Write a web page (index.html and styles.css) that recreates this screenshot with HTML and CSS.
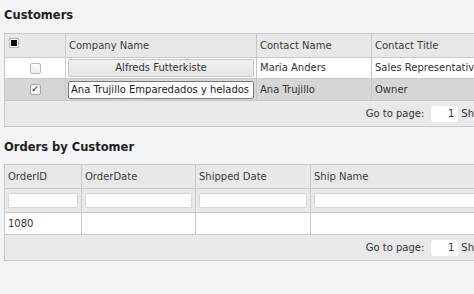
FILE: index.html
```html
<!DOCTYPE html>
<html>
<head>
<meta charset="utf-8">
<link rel="stylesheet" href="styles.css">
</head>
<body>
<div class="page">
  <h2 class="title first">Customers</h2>
  <div class="grid grid-customers">
    <table class="tbl">
      <colgroup>
        <col class="c-sel"><col class="c-company"><col class="c-contact"><col class="c-title">
      </colgroup>
      <thead>
        <tr class="head">
          <th class="sel-head"><span class="hdr-check"></span></th>
          <th>Company Name</th>
          <th>Contact Name</th>
          <th>Contact Title</th>
        </tr>
      </thead>
      <tbody>
        <tr class="row row1">
          <td class="sel"><span class="chk"></span></td>
          <td class="edit"><span class="btn">Alfreds Futterkiste</span></td>
          <td>Maria Anders</td>
          <td>Sales Representative</td>
        </tr>
        <tr class="row row2 selected">
          <td class="sel"><span class="chk checked">✓</span></td>
          <td class="edit"><span class="txt">Ana Trujillo Emparedados y helados</span></td>
          <td>Ana Trujillo</td>
          <td>Owner</td>
        </tr>
      </tbody>
    </table>
    <div class="pager">
      <span class="lbl">Go to page:</span>
      <span class="pg">1</span>
      <span class="lbl">Show rows:</span>
      <span class="pg">10</span>
      <span class="lbl">1-2 of 2</span>
    </div>
  </div>

  <h2 class="title second">Orders by Customer</h2>
  <div class="grid grid-orders">
    <table class="tbl">
      <colgroup>
        <col class="c-oid"><col class="c-odate"><col class="c-sdate"><col class="c-sname">
      </colgroup>
      <thead>
        <tr class="head">
          <th>OrderID</th>
          <th>OrderDate</th>
          <th>Shipped Date</th>
          <th>Ship Name</th>
        </tr>
        <tr class="filter">
          <td><span class="fin"></span></td>
          <td><span class="fin"></span></td>
          <td><span class="fin"></span></td>
          <td><span class="fin"></span></td>
        </tr>
      </thead>
      <tbody>
        <tr class="row data">
          <td>1080</td>
          <td></td>
          <td></td>
          <td></td>
        </tr>
      </tbody>
    </table>
    <div class="pager">
      <span class="lbl">Go to page:</span>
      <span class="pg">1</span>
      <span class="lbl">Show rows:</span>
      <span class="pg">10</span>
      <span class="lbl">1-1 of 1</span>
    </div>
  </div>
</div>
</body>
</html>
```

FILE: styles.css
```css
html, body {
  margin: 0;
  padding: 0;
}
body {
  background: #f3f4f6;
  font-family: "DejaVu Sans", Verdana, sans-serif;
  font-size: 10px;
  color: #333;
  overflow: hidden;
  width: 474px;
  height: 294px;
}
.page {
  padding-left: 4px;
  width: 700px;
}
.title {
  font-size: 11.5px;
  line-height: 14px;
  font-weight: bold;
  color: #1e1e1e;
  margin: 0;
}
.title.first {
  margin-top: 8px;
  margin-bottom: 11px;
}
.title.second {
  margin-top: 13px;
  margin-bottom: 10px;
}
.grid {
  width: 597px;
  border: 1px solid #c9c9c9;
  background: #e9e9e9;
}
.tbl {
  border-collapse: separate;
  border-spacing: 0;
  table-layout: fixed;
  width: 100%;
}
.c-sel { width: 61px; }
.c-company { width: 191px; }
.c-contact { width: 115px; }
.c-oid { width: 77px; }
.c-odate { width: 114px; }
.c-sdate { width: 115px; }
.tbl th, .tbl td {
  box-sizing: border-box;
  border-right: 1px solid #c9c9c9;
  border-bottom: 1px solid #c9c9c9;
  padding: 0 3px;
  text-align: left;
  font-weight: normal;
  white-space: nowrap;
  overflow: hidden;
  vertical-align: middle;
  line-height: 12px;
}
.head th {
  height: 24px;
  background: #e8e8e8;
  color: #3a3a3a;
}
.tbl th.sel-head {
  vertical-align: top;
  padding-top: 5px;
  padding-left: 5px;
}
.hdr-check {
  display: block;
  width: 6px;
  height: 6px;
  background: #000;
  border: 1px solid #fff;
  box-shadow: 0 0 0 1px #b5b5b5;
}
.row td {
  background: #fff;
  color: #333;
}
.row1 td { height: 21px; }
.row2 td { height: 22px; }
.row.selected td {
  background: #d6d6d6;
}
.tbl td.sel {
  text-align: center;
}
.chk {
  display: inline-block;
  box-sizing: border-box;
  width: 11px;
  height: 11px;
  border: 1px solid #b8b8b8;
  border-radius: 2px;
  background: linear-gradient(#fdfdfd, #ececec);
  vertical-align: middle;
  font-size: 9px;
  line-height: 9px;
  text-align: center;
  color: #111;
}
.chk.checked {
  background: #f4f4f4;
  border-color: #a8a8a8;
}
.tbl td.edit {
  padding: 0 2px;
}
.btn, .txt {
  display: block;
  box-sizing: border-box;
  height: 18px;
  line-height: 16px;
  border-radius: 2px;
  overflow: hidden;
  white-space: nowrap;
}
.btn {
  text-align: center;
  background: linear-gradient(#f1f1f1, #e6e6e6);
  border: 1px solid #c6c6c6;
  color: #333;
}
.txt {
  text-align: left;
  background: #fff;
  border: 1px solid #7a7a7a;
  padding-left: 2px;
  color: #222;
}
.filter td {
  height: 24px;
  background: #e8e8e8;
}
.fin {
  display: block;
  box-sizing: border-box;
  height: 15px;
  background: #fff;
  border: 1px solid #d6d6d6;
  border-radius: 2px;
}
.data td {
  height: 22px;
}
.pager {
  height: 25px;
  display: flex;
  align-items: center;
  justify-content: flex-end;
  gap: 7px;
  padding-right: 8px;
  background: #e9e9e9;
  color: #333;
}
.pg {
  display: inline-block;
  box-sizing: border-box;
  width: 27px;
  height: 16px;
  line-height: 16px;
  padding-right: 4px;
  text-align: right;
  background: #fff;
  border-radius: 3px;
  margin-right: -4px;
}
```
